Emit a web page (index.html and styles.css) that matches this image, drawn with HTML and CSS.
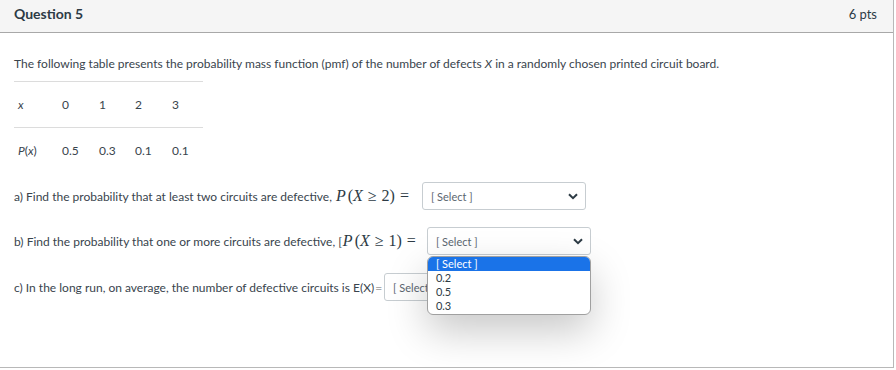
FILE: index.html
```html
<!DOCTYPE html>
<html>
<head>
<meta charset="utf-8">
<link rel="stylesheet" href="styles.css">
</head>
<body>
<div class="card">
  <div class="header">
    <span class="title">Question 5</span>
    <span class="pts">6 pts</span>
  </div>
  <div class="body">
    <p class="intro">The following table presents the probability mass function (pmf) of the number of defects <i>X</i> in a randomly chosen printed circuit board.</p>
    <div class="table">
      <div class="row first">
        <div class="cell"><i>x</i></div><div class="cell">0</div><div class="cell">1</div><div class="cell">2</div><div class="cell">3</div>
      </div>
      <div class="row">
        <div class="cell"><i>P</i>(<i>x</i>)</div><div class="cell">0.5</div><div class="cell">0.3</div><div class="cell">0.1</div><div class="cell">0.1</div>
      </div>
    </div>
    <div class="q qa">
      <span class="qtext">a) Find the probability that at least two circuits are defective, </span>
      <span class="math"><i>P</i><span class="sp">(</span><i>X</i><span class="op">≥</span>2)<span class="op">=</span></span>
      <div class="sel"><span class="seltext">[ Select ]</span><svg class="chev" width="10" height="7" viewBox="0 0 10 7"><path d="M1 1.2 L5 5.2 L9 1.2" fill="none" stroke="#2d3b45" stroke-width="2"/></svg></div>
    </div>
    <div class="q qb">
      <span class="qtext">b) Find the probability that one or more circuits are defective, [</span>
      <span class="math tight"><i>P</i><span class="sp">(</span><i>X</i><span class="op">≥</span>1)<span class="op">=</span></span>
      <div class="sel wrap"><span class="seltext">[ Select ]</span><svg class="chev" width="10" height="7" viewBox="0 0 10 7"><path d="M1 1.2 L5 5.2 L9 1.2" fill="none" stroke="#2d3b45" stroke-width="2"/></svg>
        <div class="menu">
          <div class="opt active">[ Select ]</div>
          <div class="opt">0.2</div>
          <div class="opt">0.5</div>
          <div class="opt">0.3</div>
        </div>
      </div>
    </div>
    <div class="q qc">
      <span class="qtext">c) In the long run, on average, the number of defective circuits is E(X)<span class="eq">=</span></span>
      <div class="sel selc"><span class="seltext">[ Select ]</span></div>
    </div>
  </div>
</div>
</body>
</html>
```

FILE: styles.css
```css
html, body {
  margin: 0;
  padding: 0;
  background: #ffffff;
}
body {
  font-family: Lato, "Open Sans", sans-serif;
  color: #2d3b45;
}
.card {
  width: 893px;
  height: 367px;
  border-right: 1px solid #b8b8b8;
  border-bottom: 1px solid #b8b8b8;
  box-sizing: content-box;
  overflow: hidden;
}
.header {
  height: 32px;
  background: #f5f5f5;
  border-bottom: 1px solid #a8a8a8;
  display: flex;
  align-items: center;
  justify-content: space-between;
  padding: 0 16px 0 14px;
}
.title {
  font-weight: 700;
  font-size: 14px;
  color: #2d3b45;
  margin-top: -5px;
}
.pts {
  font-size: 13px;
  color: #2d3b45;
  margin-top: -5px;
}
.body {
  padding: 23px 0 0 14px;
  font-size: 12px;
}
.intro {
  margin: 0;
  line-height: 16px;
  font-size: 12px;
  color: #39444d;
}
.table {
  margin-top: 9px;
  width: 189px;
  border-top: 1px solid #dcdcdc;
}
.row {
  display: grid;
  grid-template-columns: 44px 37px 36px 37px 35px;
  height: 45px;
  align-items: center;
  font-size: 12px;
  color: #39444d;
}
.row.first {
  border-bottom: 1px solid #dcdcdc;
}
.cell {
  padding-left: 4px;
}
.q {
  display: flex;
  align-items: center;
  height: 28px;
  font-size: 12px;
  color: #39444d;
}
.qa { margin-top: 9px; }
.qb { margin-top: 17px; }
.qc { margin-top: 18px; }
.math {
  font-family: "Liberation Serif", "DejaVu Serif", serif;
  font-size: 16px;
  margin-left: 4px;
  color: #2d3b45;
}
.math.tight { margin-left: 1px; }
.math .sp { margin-left: 2px; }
.math .op { margin: 0 5px; }
.eq {
  color: #aaa;
  margin-left: 1px;
}
.sel {
  position: relative;
  width: 164px;
  height: 28px;
  box-sizing: border-box;
  border: 1px solid #c7cdd1;
  border-radius: 3px;
  background: #fff;
  display: flex;
  align-items: center;
  justify-content: space-between;
  padding: 0 7px 0 8px;
  margin-left: 8px;
}
.qb .sel { margin-left: 6px; }
.selc { margin-left: 2px; }
.seltext {
  font-size: 11px;
  color: #5b6670;
}
.menu {
  position: absolute;
  left: -1px;
  top: 28px;
  width: 164px;
  box-sizing: border-box;
  border: 1px solid #a0a0a0;
  border-radius: 6px;
  background: #fff;
  box-shadow: 0 16px 40px rgba(0, 0, 0, 0.22);
  overflow: hidden;
  padding-bottom: 1px;
  z-index: 5;
}
.opt {
  height: 14px;
  line-height: 14px;
  font-size: 11px;
  padding-left: 8px;
  color: #2d3b45;
}
.opt.active {
  background: #1a73e8;
  color: #fff;
}
```
